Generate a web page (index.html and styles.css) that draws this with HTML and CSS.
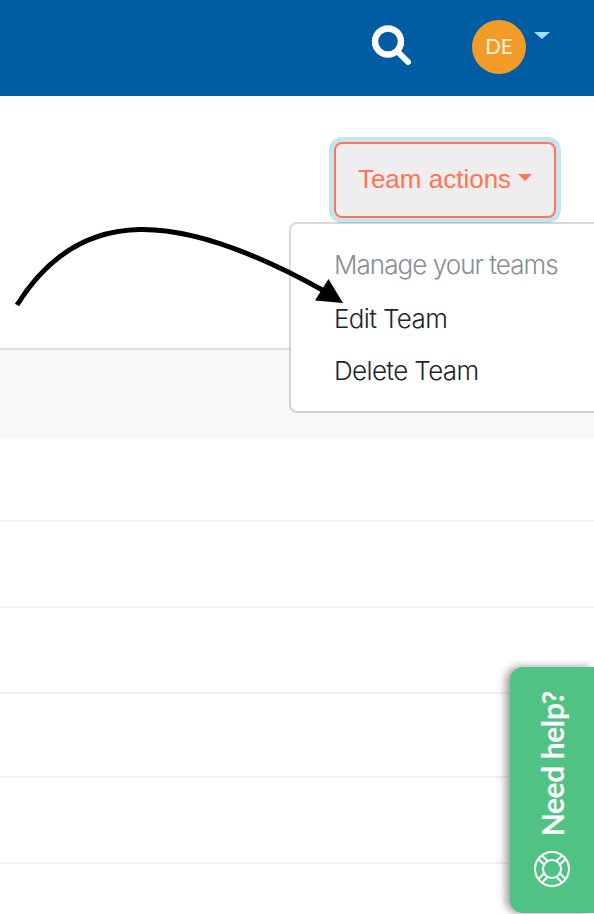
FILE: index.html
```html
<!DOCTYPE html>
<html lang="en">
<head>
  <meta charset="UTF-8">
  <meta name="viewport" content="width=device-width, initial-scale=1.0">
  <title>Teams</title>
  <link rel="stylesheet" href="styles.css">
</head>
<body>
  <!-- Top bar -->
  <header class="navbar">
    <svg class="search-icon" width="42" height="42" viewBox="0 0 42 42">
      <circle cx="17" cy="16.500" r="13" fill="none" stroke="#fff" stroke-width="6.400"/>
      <path d="M27 27 L37 37" fill="none" stroke="#fff" stroke-width="6" stroke-linecap="round"/>
    </svg>
    <div class="user">
      <div class="avatar">DE</div>
      <span class="caret user-caret"></span>
    </div>
  </header>

  <!-- Team actions button and its menu -->
  <section class="toolbar">
    <div class="dropdown">
      <button class="btn-actions" type="button"><span class="btn-label">Team actions</span><span class="caret"></span></button>
      <div class="dropdown-menu">
        <div class="dropdown-header">Manage your teams</div>
        <div class="dropdown-item">Edit Team</div>
        <div class="dropdown-item">Delete Team</div>
      </div>
    </div>
  </section>

  <!-- Teams table -->
  <main class="table">
    <div class="table-head"></div>
    <div class="row short"></div>
    <div class="row"></div>
    <div class="row"></div>
    <div class="row short"></div>
    <div class="row"></div>
  </main>

  <!-- Arrow pointing to "Edit Team" -->
  <svg class="arrow" width="360" height="120" viewBox="0 0 360 120">
    <path d="M17 105 C80 4 178 9 326 92" fill="none" stroke="#000" stroke-width="5"/>
    <path d="M328.500 79 L343 103 L315 100.500 Z"/>
  </svg>

  <!-- Help tab -->
  <aside class="help">
    <span class="help-text">Need help?</span>
    <svg class="help-icon" width="38" height="38" viewBox="0 0 38 38" fill="none" stroke="#fff" stroke-width="2">
      <circle cx="19" cy="19" r="17"/>
      <circle cx="19" cy="19" r="9"/>
      <path d="M5.500 9 L11.500 15 M9 5.500 L15 11.500 M29 5.500 L23 11.500 M32.500 9 L26.500 15 M5.500 29 L11.500 23 M9 32.500 L15 26.500 M32.500 29 L26.500 23 M29 32.500 L23 26.500"/>
    </svg>
  </aside>
</body>
</html>
```
FILE: styles.css
```css
html, body {
  margin: 0;
  padding: 0;
  height: 100%;
  overflow: hidden;
}
body {
  position: relative;
  box-sizing: border-box;
  background-color: #fff;
  color: #212529;
  font-family: Inter, "Liberation Sans", sans-serif;
  font-size: 26px;
}

/* Top bar */
.navbar {
  display: flex;
  justify-content: flex-end;
  gap: 59px;
  height: 96px;
  padding: 0 44px 0 0;
  box-sizing: border-box;
  background-color: #005da4;
}
.search-icon {
  margin-top: 25px;
}
.user {
  display: flex;
  gap: 8px;
  padding-top: 20px;
}
.avatar {
  display: flex;
  align-items: center;
  justify-content: center;
  width: 54px;
  height: 54px;
  padding-bottom: 2px;
  box-sizing: border-box;
  border-radius: 50%;
  background-color: #f29b27;
  color: #fff4e0;
  font-family: Lato, sans-serif;
  font-size: 20.5px;
}
.caret {
  border-left: 7px solid transparent;
  border-right: 7px solid transparent;
  border-top: 7px solid #ff7557;
}
.user-caret {
  align-self: flex-start;
  margin-top: 12px;
  border-left-width: 8px;
  border-right-width: 8px;
  border-top-color: #a9dcff;
}

/* Button with menu */
.toolbar {
  display: flex;
  justify-content: flex-end;
  height: 252px;
  padding: 46px 38px 0 0;
  box-sizing: border-box;
}
.dropdown {
  position: relative;
  height: 76px;
}
.btn-actions {
  display: flex;
  align-items: center;
  justify-content: center;
  gap: 7px;
  width: 222px;
  height: 76px;
  padding: 0 0 2px;
  border: 2px solid #ff7557;
  border-radius: 8px;
  background-color: #eee;
  box-shadow: 0 0 0 5px #c5e4f1;
  color: #ff7557;
  font-family: "Liberation Sans", sans-serif;
  font-size: 26px;
}
.btn-actions .caret {
  margin-bottom: 4px;
}
.dropdown-menu {
  position: absolute;
  top: 80px;
  left: -45px;
  z-index: 10;
  width: 330px;
  height: 191px;
  padding: 16px 0 0 43px;
  box-sizing: border-box;
  border: 2px solid rgba(0, 0, 0, 0.15);
  border-radius: 8px;
  background-color: #fff;
  background-clip: padding-box;
  font-weight: 300;
  white-space: nowrap;
  letter-spacing: -0.65px;
}
.dropdown-header {
  height: 54px;
  line-height: 50px;
  letter-spacing: -0.95px;
  color: #868e96;
}
.dropdown-item {
  height: 52px;
  line-height: 50px;
}

/* Table */
.table-head {
  height: 90px;
  box-sizing: border-box;
  border-top: 2px solid #dcdfe6;
  background-color: #f6f8fa;
}
.row {
  height: 86px;
  box-sizing: border-box;
  border-bottom: 2px solid #f1f1f1;
}
.row.short {
  height: 84px;
}

/* Arrow over the page */
.arrow {
  position: absolute;
  top: 200px;
  left: 0;
  z-index: 20;
}

/* Help tab on the right edge */
.help {
  position: absolute;
  top: 667px;
  right: 0;
  z-index: 20;
  display: flex;
  flex-direction: column;
  align-items: center;
  justify-content: space-between;
  width: 84px;
  height: 246px;
  padding: 24px 0 25px;
  box-sizing: border-box;
  border-radius: 13px 0 0 13px;
  background-color: #50c384;
  box-shadow: -4px 0 8px rgba(0, 0, 0, 0.4);
}
.help-text {
  writing-mode: vertical-rl;
  transform: rotate(180deg);
  color: #fff;
  font-family: Lato, sans-serif;
  font-weight: bold;
  font-size: 30px;
  line-height: 36px;
  letter-spacing: -0.4px;
}
```
